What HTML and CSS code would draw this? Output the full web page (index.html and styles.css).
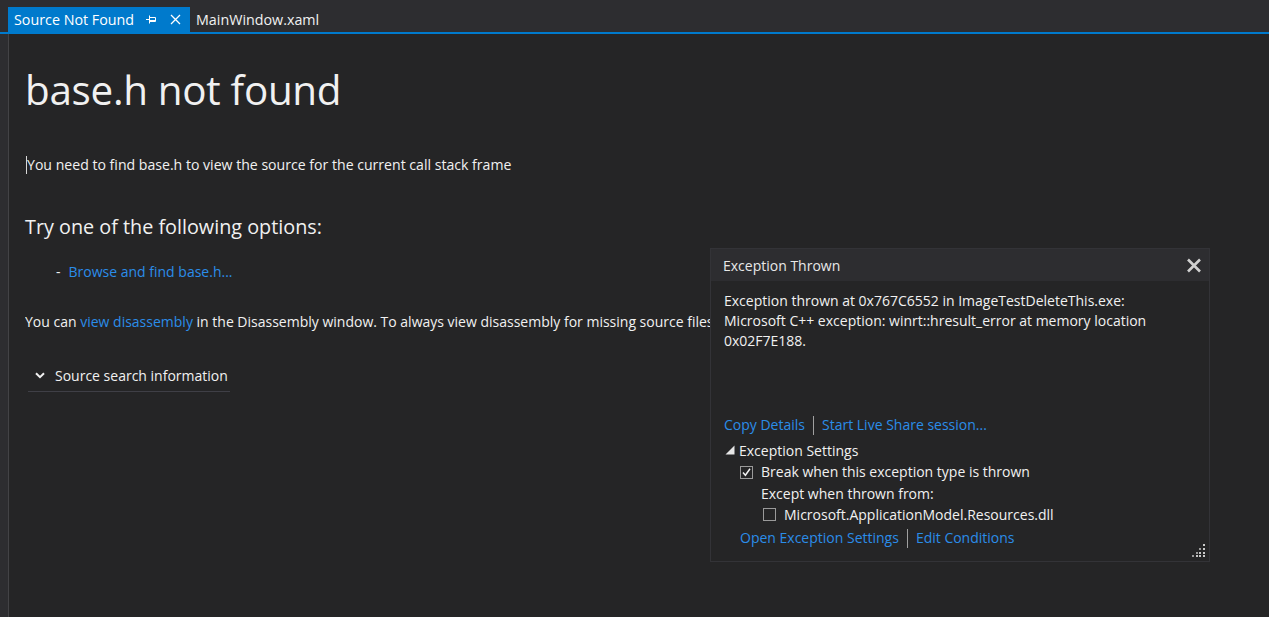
FILE: index.html
```html
<!DOCTYPE html>
<html lang="en">
<head>
<meta charset="utf-8">
<title>Source Not Found</title>
<link rel="stylesheet" href="styles.css">
</head>
<body>
<div class="tabbar">
  <div class="tab tab-active">
    <span class="tab-label">Source Not Found</span>
    <svg class="pin" width="11" height="9" viewBox="0 0 11 9"><path d="M0 4.5h3.5M3.5 0.5v8M3.5 2.5h6v4h-6" fill="none" stroke="#fff" stroke-width="1"/><path d="M3.5 5.5h6" stroke="#fff" stroke-width="1"/></svg>
    <svg class="tabclose" width="11" height="11" viewBox="0 0 11 11"><path d="M1 1L10 10M10 1L1 10" stroke="#fff" stroke-width="1.3"/></svg>
  </div>
  <div class="tab">
    <span class="tab-label">MainWindow.xaml</span>
  </div>
</div>
<div class="tabline"></div>
<div class="main">
  <div class="gutter"></div>
  <div class="content">
    <h1 class="title">base.h not found</h1>
    <p class="intro"><span class="caret"></span>You need to find base.h to view the source for the current call stack frame</p>
    <h2 class="subtitle">Try one of the following options:</h2>
    <div class="option"><span class="dash">-</span><a class="link">Browse and find base.h...</a></div>
    <p class="disasm">You can <a class="link">view disassembly</a> in the Disassembly window. To always view disassembly for missing source files, change the setting in the Options dialog.</p>
    <div class="expander">
      <svg class="chev" width="10" height="7" viewBox="0 0 10 7"><path d="M1 1.2L5 5.2L9 1.2" fill="none" stroke="#f1f1f1" stroke-width="2"/></svg>
      <span>Source search information</span>
    </div>
  </div>
</div>

<div class="popup">
  <div class="popup-head">
    <span>Exception Thrown</span>
    <svg class="popclose" width="16" height="15" viewBox="0 0 16 15"><path d="M2 1.5L14 13.5M14 1.5L2 13.5" stroke="#d0d0d0" stroke-width="2.6"/></svg>
  </div>
  <div class="popup-body">
    <p class="msg">Exception thrown at 0x767C6552 in ImageTestDeleteThis.exe:<br>Microsoft C++ exception: winrt::hresult_error at memory location<br>0x02F7E188.</p>
    <div class="links links-top"><a class="link">Copy Details</a><span class="bar"></span><a class="link">Start Live Share session...</a></div>
    <div class="settings-head">
      <svg class="tri" width="10" height="10" viewBox="0 0 10 10"><path d="M9.5 0.5V9.5H0.5Z" fill="#e6e6e6"/></svg>
      <span>Exception Settings</span>
    </div>
    <div class="check-row">
      <span class="checkbox"><svg width="11" height="11" viewBox="0 0 11 11"><path d="M2 5.5L4.4 8.2L9 1.8" fill="none" stroke="#f1f1f1" stroke-width="1.5"/></svg></span>
      <span>Break when this exception type is thrown</span>
    </div>
    <div class="except-row">Except when thrown from:</div>
    <div class="check-row check-row-sub">
      <span class="checkbox"></span>
      <span>Microsoft.ApplicationModel.Resources.dll</span>
    </div>
    <div class="links links-bottom"><a class="link">Open Exception Settings</a><span class="bar"></span><a class="link">Edit Conditions</a></div>
    <svg class="grip" width="13" height="13" viewBox="0 0 13 13">
      <rect x="11" y="0" width="2" height="2" fill="#c8c8c8"/>
      <rect x="11" y="4" width="2" height="2" fill="#c8c8c8"/>
      <rect x="7" y="4" width="2" height="2" fill="#9a9a9a"/>
      <rect x="11" y="8" width="2" height="2" fill="#c8c8c8"/>
      <rect x="7" y="8" width="2" height="2" fill="#c8c8c8"/>
      <rect x="4" y="8" width="2" height="2" fill="#9a9a9a"/>
      <rect x="11" y="11" width="2" height="2" fill="#c8c8c8"/>
      <rect x="7" y="11" width="2" height="2" fill="#c8c8c8"/>
      <rect x="4" y="11" width="2" height="2" fill="#c8c8c8"/>
      <rect x="0" y="11" width="2" height="2" fill="#9a9a9a"/>
    </svg>
  </div>
</div>
</body>
</html>
```

FILE: styles.css
```css
* { box-sizing: border-box; }
html, body { margin: 0; padding: 0; height: 100%; }
body {
  background: #2d2d30;
  font-family: "Open Sans", "Noto Sans", sans-serif;
  color: #f1f1f1;
  overflow: hidden;
  height: 617px;
  display: flex;
  flex-direction: column;
}
.tabbar {
  height: 32px;
  padding-left: 8px;
  display: flex;
  align-items: flex-end;
  flex: none;
}
.tab {
  height: 25px;
  display: flex;
  align-items: center;
  padding: 0 6px;
  font-size: 14.3px;
  color: #f1f1f1;
  white-space: nowrap;
}
.tab-active {
  background: #007acc;
  color: #ffffff;
  width: 182px;
}
.pin { margin-left: 12px; }
.tabclose { margin-left: 13px; }
.tabline { height: 2px; background: #007acc; flex: none; }
.main { flex: 1; display: flex; min-height: 0; }
.gutter {
  width: 9px;
  background: #2d2d30;
  border-right: 1px solid #434346;
  flex: none;
}
.content {
  flex: 1;
  background: #252526;
  padding-left: 16px;
  overflow: hidden;
}
.title {
  margin: 28px 0 0 0;
  font-weight: 400;
  font-size: 40.4px;
  line-height: 56px;
  color: #f1f1f1;
  letter-spacing: -0.3px;
}
.intro {
  margin: 37px 0 0 0;
  font-size: 14.1px;
  line-height: 20px;
  color: #f1f1f1;
  position: relative;
  padding-left: 2px;
}
.caret {
  position: absolute;
  left: 1px;
  top: 1px;
  width: 1px;
  height: 18px;
  background: #d8d8d8;
}
.subtitle {
  margin: 39px 0 0 0;
  font-weight: 400;
  font-size: 19.8px;
  line-height: 26px;
  color: #f1f1f1;
}
.option {
  margin: 22px 0 0 31px;
  font-size: 14px;
  line-height: 20px;
}
.dash { margin-right: 8px; }
.link { color: #2b8de9; cursor: pointer; }
.disasm {
  margin: 30px 0 0 0;
  width: 685px;
  font-size: 14px;
  line-height: 20px;
  white-space: nowrap;
  overflow: hidden;
}
.expander {
  margin: 30px 0 0 3px;
  width: 202px;
  height: 30px;
  display: flex;
  align-items: center;
  gap: 10px;
  padding-left: 7px;
  padding-bottom: 2px;
  border-bottom: 1px solid #3f3f46;
  font-size: 14px;
}
.chev { flex: none; }

.popup {
  position: absolute;
  left: 710px;
  top: 248px;
  width: 500px;
  height: 314px;
  background: #252526;
  border: 1px solid #333337;
  display: flex;
  flex-direction: column;
}
.popup-head {
  height: 32px;
  background: #2d2d30;
  display: flex;
  align-items: center;
  justify-content: space-between;
  padding: 0 7px 0 12px;
  font-size: 14px;
  color: #e8e8e8;
  flex: none;
}
.popup-body {
  flex: 1;
  position: relative;
  padding: 10px 13px 0 13px;
  font-size: 14px;
  line-height: 20px;
}
.msg { margin: 0; color: #f1f1f1; }
.links { display: flex; align-items: center; height: 20px; }
.links-top { margin-top: 64px; }
.bar {
  width: 1px;
  height: 19px;
  background: #a0a0a0;
  margin: 0 8px;
}
.settings-head {
  margin-top: 6px;
  height: 20px;
  display: flex;
  align-items: center;
  gap: 4px;
  padding-left: 1px;
}
.tri { margin-top: -3px; }
.check-row {
  height: 22px;
  display: flex;
  align-items: center;
  gap: 8px;
  padding-left: 16px;
}
.check-row-sub { padding-left: 39px; height: 21px; }
.checkbox {
  width: 13px;
  height: 13px;
  border: 1px solid #9a9a9a;
  display: flex;
  align-items: center;
  justify-content: center;
  flex: none;
}
.except-row { padding-left: 37px; height: 21px; line-height: 21px; }
.links-bottom { margin-top: 3px; padding-left: 16px; }
.grip { position: absolute; right: 4px; bottom: 4px; }
```
